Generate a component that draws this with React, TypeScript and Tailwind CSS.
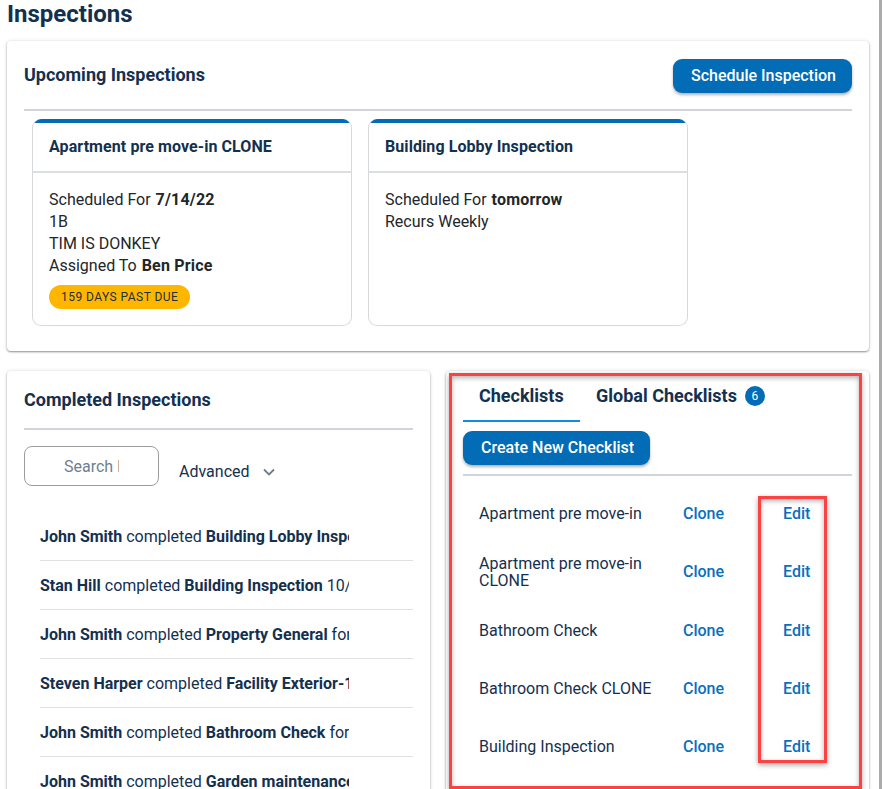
import React from 'react';

const navy = 'text-[#14304f]';
const cardShadow = 'shadow-[0_1px_2px_rgba(0,0,0,0.4),0_0_4px_rgba(0,0,0,0.1)]';

function Primary({ children }: { children: React.ReactNode }) {
  return (
    <button className="h-[34px] rounded-[9px] bg-[#026cb6] pl-[18px] pr-[16px] text-[16px] font-medium text-white shadow-[0_2px_3px_rgba(0,0,0,0.3)]">
      {children}
    </button>
  );
}

function UpcomingCard({ title, children }: { title: string; children: React.ReactNode }) {
  return (
    <div className="h-[207px] w-[320px] overflow-hidden rounded-[9px] border border-t-0 border-[#d6d9dc] bg-white">
      <div className={`h-[54px] border-t-4 border-b-2 border-t-[#026cb6] border-b-[#dcdfe2] pl-4 pt-[13px] text-[16px] leading-[22px] font-bold tracking-[0.08px] ${navy}`}>
        {title}
      </div>
      <div className="px-4 pt-[16px] text-[16px] leading-[22px] text-[#22262a]">{children}</div>
    </div>
  );
}

function Strong({ children }: { children: React.ReactNode }) {
  return <b className="ml-px tracking-[0.2px]">{children}</b>;
}

const completed: [string, string, string][] = [
  ['John Smith', 'Building Lobby Inspection', ' for 1B'],
  ['Stan Hill', 'Building Inspection', ' 10/12/22'],
  ['John Smith', 'Property General', ' for 1B'],
  ['Steven Harper', 'Facility Exterior-1', ' for 1B'],
  ['John Smith', 'Bathroom Check', ' for 1B'],
  ['John Smith', 'Garden maintenance', ' for 1B'],
];

const checklists: [string, string][] = [
  ['Apartment pre move-in', 'h-[58px]'],
  ['Apartment pre move-in CLONE', 'h-[59px]'],
  ['Bathroom Check', 'h-[58px]'],
  ['Bathroom Check CLONE', 'h-[58px]'],
  ['Building Inspection', 'h-[58px]'],
];

export default function App() {
  return (
    <div className="relative h-[789px] w-[882px] overflow-hidden bg-white pl-[7px] font-['Roboto',sans-serif]">
      <h1 className={`h-[41px] text-[24px] leading-[28px] font-bold ${navy}`}>Inspections</h1>

      <section className={`h-[310px] w-[862px] rounded-[4px] bg-white px-[17px] ${cardShadow}`}>
        <div className="flex h-[70px] items-center justify-between border-b-2 border-[#d1d5d9] pt-px">
          <h2 className={`-mt-[2px] text-[18px] font-bold ${navy}`}>Upcoming Inspections</h2>
          <Primary>Schedule Inspection</Primary>
        </div>
        <div className="flex gap-4 pl-2 pt-2">
          <UpcomingCard title="Apartment pre move-in CLONE">
            <div>Scheduled For <Strong>7/14/22</Strong></div>
            <div>1B</div>
            <div>TIM IS DONKEY</div>
            <div>Assigned To <Strong>Ben Price</Strong></div>
            <span className="mt-[8px] inline-block h-6 rounded-full bg-[#ffb600] px-3 text-[12px] leading-6 tracking-[0.46px] text-[#22303f]">
              159 DAYS PAST DUE
            </span>
          </UpcomingCard>
          <UpcomingCard title="Building Lobby Inspection">
            <div>Scheduled For <Strong>tomorrow</Strong></div>
            <div>Recurs Weekly</div>
          </UpcomingCard>
        </div>
      </section>

      <div className="mt-5 flex gap-4">
        <section className={`h-[440px] w-[423px] shrink-0 rounded-[4px] bg-white px-[17px] ${cardShadow}`}>
          <h2 className={`h-[59px] border-b-2 border-[#d1d5d9] pt-[16px] text-[18px] leading-[26px] font-bold ${navy}`}>
            Completed Inspections
          </h2>
          <div className="flex pt-4">
            <div className="h-10 w-[135px] overflow-hidden whitespace-nowrap rounded-[8px] border border-[#9a9da0] pl-[39px] pt-[9px] text-[16px] leading-[22px] text-[#6d7f92]">
              <div className="w-[55px] overflow-hidden">Search Inspections</div>
            </div>
            <div className={`ml-5 flex items-center gap-3 pt-[12px] text-[16px] ${navy}`}>
              Advanced
              <svg width="14" height="14" viewBox="0 0 14 14" fill="none" stroke="#6f7d8b" strokeWidth="1.8">
                <path d="M2 4.5 7 9.5 12 4.5" />
              </svg>
            </div>
          </div>
          <div className="ml-4 mt-[26px]">
            {completed.map(([who, what, rest], i) => (
              <div key={i} className={`h-[49px] border-b border-[#dfe2e5] pt-[14px] text-[16px] leading-[22px] ${navy}`}>
                <div className="w-[309px] overflow-hidden whitespace-nowrap">
                  <b>{who}</b> completed <b>{what}</b>{rest}
                </div>
              </div>
            ))}
          </div>
        </section>

        <section className={`h-[440px] w-[423px] shrink-0 rounded-[4px] bg-white px-[17px] ${cardShadow}`}>
          <div className="flex h-[51px] items-start">
            <div className={`h-[51px] w-[117px] border-b-2 border-[#118ce0] pl-[16px] pt-[13px] text-[18px] leading-[24px] font-bold ${navy}`}>
              Checklists
            </div>
            <div className={`ml-4 flex items-center gap-2 pt-[13px] text-[18px] leading-[24px] font-bold ${navy}`}>
              Global Checklists
              <span className="flex h-5 w-5 items-center justify-center rounded-full bg-[#026cb6] text-[12px] font-normal text-white">6</span>
            </div>
          </div>
          <div className="h-[54px] border-b-2 border-[#d1d5d9] pt-[9px]">
            <Primary>Create New Checklist</Primary>
          </div>
          <div className="pt-[8px]">
            {checklists.map(([name, h]) => (
              <div key={name} className={`flex items-center text-[16px] leading-[17px] ${h} ${navy}`}>
                <div className="w-[220px] pl-4">{name}</div>
                <div className="w-[100px] font-medium text-[#0a6fbf]">Clone</div>
                <div className="font-medium text-[#0a6fbf]">Edit</div>
              </div>
            ))}
          </div>
        </section>
      </div>

      {/* annotation boxes */}
      <div className="absolute left-[449px] top-[373px] h-[416px] w-[413px] border-[3px] border-[#fb4343] shadow-[0_2px_5px_rgba(0,0,0,0.35),inset_0_2px_5px_rgba(0,0,0,0.3)]" />
      <div className="absolute left-[758px] top-[496px] h-[267px] w-[69px] border-[3px] border-[#fb4343] shadow-[0_2px_5px_rgba(0,0,0,0.35),inset_0_2px_5px_rgba(0,0,0,0.3)]" />

      {/* scrollbar edge */}
      <div className="absolute right-0 top-0 h-full w-[3px] bg-[#ababab]" />
    </div>
  );
}
